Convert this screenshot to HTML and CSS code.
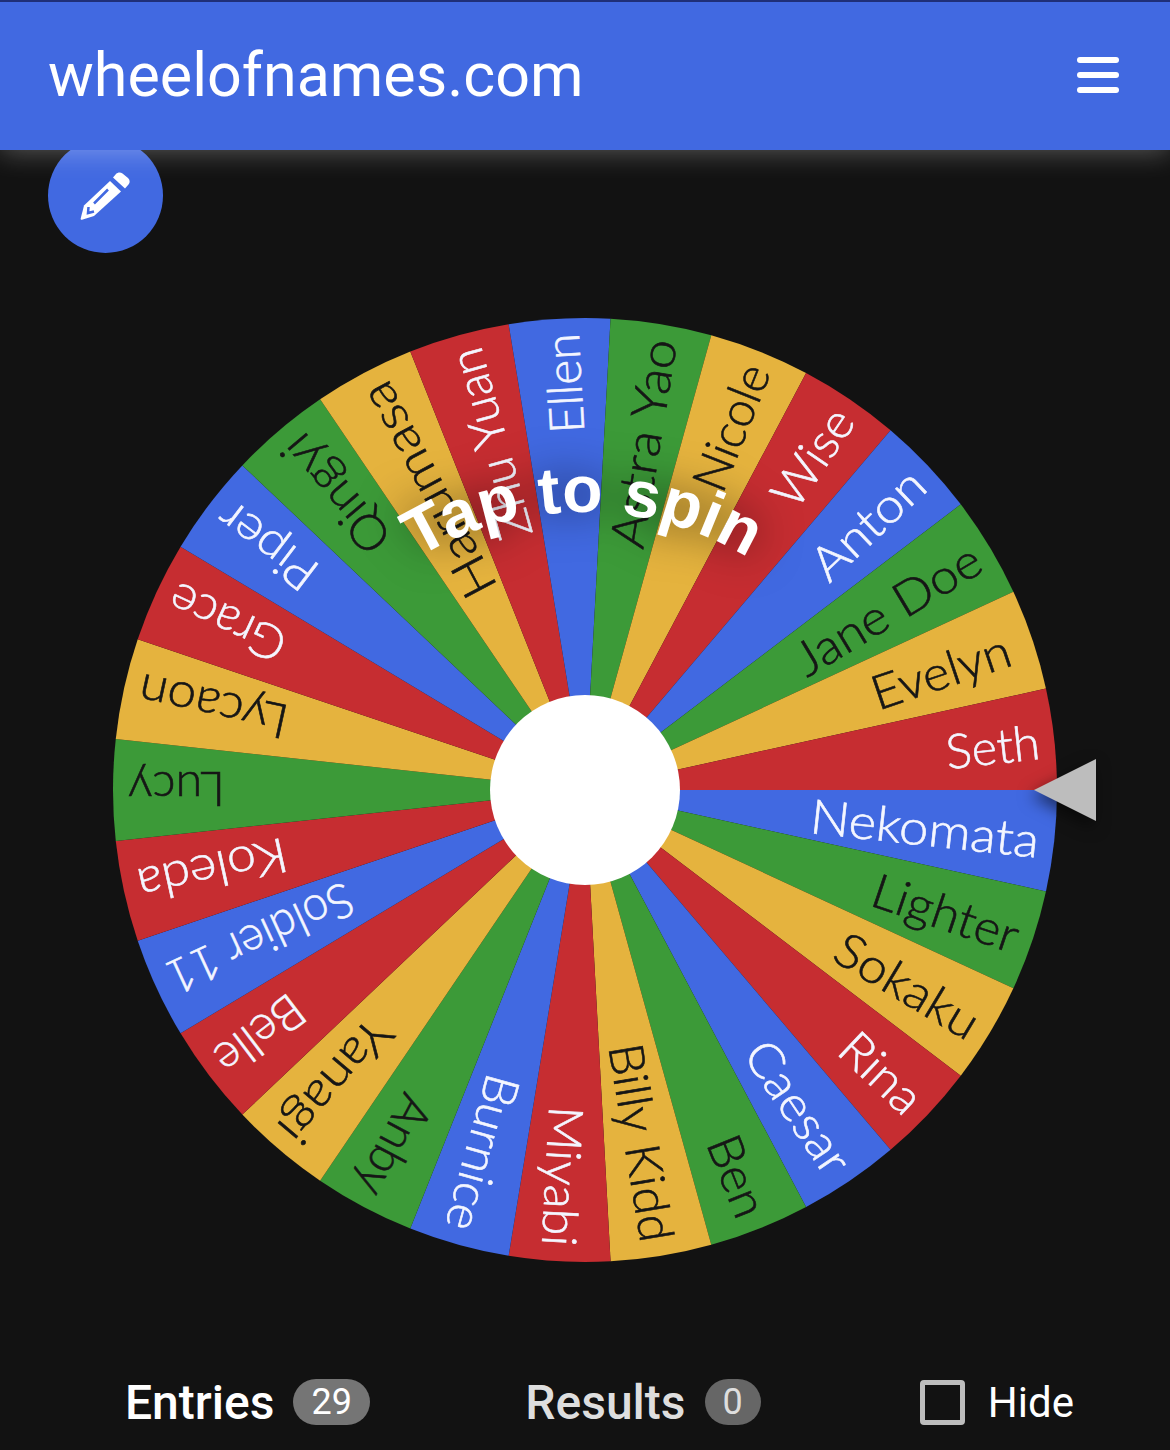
FILE: index.html
```html
<!DOCTYPE html>
<html lang="en">
<head>
    <meta charset="UTF-8">
    <meta name="viewport" content="width=device-width, initial-scale=1.0">
    <title>Wheel of Names</title>
    <link rel="stylesheet" href="styles.css">
</head>
<body>

    <header class="topbar">
        <span class="brand">wheelofnames.com</span>
        <button class="menu-btn" aria-label="Menu">
            <span></span>
            <span></span>
            <span></span>
        </button>
    </header>

    <button class="edit-btn" aria-label="Edit">
        <svg width="70" height="70" viewBox="0 0 70 70">
            <path class="pencil-cap" d="M42 16.500l3-3.500c2-2 4.500-2 6.500-.5l5.500 4.500c2 2 2.300 4.500.5 6.500l-3.500 4z"/>
            <path class="pencil-body" d="M39 20l11 10.500-27 24.500-12 3.800c-1 .2-1.500-.4-1.300-1.300l3.300-13z"/>
            <path class="pencil-slot" d="M37 28.500l-14 14M17.500 46l-.5 6 6-1.500"/>
        </svg>
    </button>

    <main class="wheel-area">
        <svg id="wheel" class="wheel" viewBox="0 0 1170 960" width="1170" height="960"></svg>
    </main>

    <footer class="tabs">
        <div class="tab tab-active">
            <span class="tab-label">Entries</span>
            <span class="badge">29</span>
        </div>
        <div class="tab tab-results">
            <span class="tab-label">Results</span>
            <span class="badge badge-dim">0</span>
        </div>
        <label class="hide-toggle">
            <span class="checkbox"></span>
            <span>Hide</span>
        </label>
    </footer>

    <script src="wheel.js"></script>
</body>
</html>
```

FILE: styles.css
```css
* {
    box-sizing: border-box;
}

html, body {
    margin: 0;
    padding: 0;
}

body {
    width: 1170px;
    height: 1450px;
    overflow: hidden;
    background-color: #121212;
    font-family: Roboto, "Liberation Sans", sans-serif;
    color: #fff;
}

.topbar {
    position: relative;
    z-index: 2;
    height: 150px;
    padding: 0 51px 0 48px;
    display: flex;
    align-items: center;
    justify-content: space-between;
    background-color: #4169e1;
    border-top: 2px solid #1f2f78;
    box-shadow: 0 2px 26px rgba(255, 255, 255, 0.3);
}

.brand {
    font-size: 61px;
    font-weight: 400;
    line-height: 1;
    margin-top: -2px;
}

.menu-btn {
    width: 42px;
    padding: 0;
    margin-top: -2px;
    display: flex;
    flex-direction: column;
    gap: 9px;
    background: none;
    border: none;
}

.menu-btn span {
    display: block;
    height: 6px;
    border-radius: 3px;
    background-color: #fff;
}

.edit-btn {
    display: flex;
    align-items: center;
    justify-content: center;
    width: 115px;
    height: 115px;
    margin: -12px 0 0 48px;
    padding: 0;
    border: none;
    border-radius: 50%;
    background-color: #4169e1;
}

.pencil-cap, .pencil-body {
    fill: #fff;
}

.pencil-slot {
    fill: none;
    stroke: #4169e1;
    stroke-width: 2.5;
}

.wheel-area {
    margin-top: 57px;
    height: 960px;
}

.wheel {
    display: block;
}

.wheel-label {
    font-family: Lato, "Open Sans", sans-serif;
    font-size: 48px;
    font-weight: 300;
    stroke-width: 0.6;
    text-anchor: end;
    dominant-baseline: central;
}

.label-light {
    fill: #f4f6ff;
    stroke: #f4f6ff;
}

.label-dark {
    fill: #161616;
    stroke: #161616;
}

.hub {
    fill: #fff;
}

.pointer {
    fill: #bdbdbd;
    filter: drop-shadow(-3px 6px 8px rgba(0, 0, 0, 0.55));
}

.spin-text {
    font-family: "Liberation Sans", Arial, sans-serif;
    font-size: 66px;
    font-weight: 700;
    fill: #fff;
    text-anchor: middle;
    filter: drop-shadow(0 0 22px rgba(0, 0, 0, 0.65));
}

.tabs {
    height: 96px;
    padding: 0 96px 0 125px;
    margin-top: 84px;
    display: flex;
    align-items: center;
    justify-content: space-between;
}

.tab {
    display: flex;
    align-items: center;
    gap: 19px;
}

.tab-results {
    margin-right: 4px;
}

.tab-label {
    font-size: 48px;
    font-weight: 500;
    color: #dedede;
}

.tab-active .tab-label {
    color: #fff;
}

.badge {
    min-width: 56px;
    height: 46px;
    padding: 0 18px;
    display: flex;
    align-items: center;
    justify-content: center;
    border-radius: 23px;
    background-color: #757575;
    font-size: 36px;
}

.badge-dim {
    padding: 0;
    background-color: #666;
    color: #dedede;
}

.hide-toggle {
    display: flex;
    align-items: center;
    gap: 23px;
    font-size: 42px;
}

.checkbox {
    width: 45px;
    height: 45px;
    border: 5px solid #bdbdbd;
    border-radius: 4px;
}
```

FILE: wheel.js
```js
const SVG_NS = 'http://www.w3.org/2000/svg';
const wheel = document.getElementById('wheel');

const CX = 585;
const CY = 480;
const RADIUS = 472;
const HUB_RADIUS = 95;
const LABEL_RADIUS = 457;

const BLUE = '#4169e1';
const GREEN = '#3c9a38';
const YELLOW = '#e5b33e';
const RED = '#c62d31';

// clockwise, starting at the pointer: name, colour, label length in px
const entries = [
    ['Nekomata', BLUE, 230], ['Lighter', GREEN, 152], ['Sokaku', YELLOW, 160], ['Rina', RED, 95],
    ['Caesar', BLUE, 150], ['Ben', GREEN, 84], ['Billy Kidd', YELLOW, 200], ['Miyabi', RED, 140],
    ['Burnice', BLUE, 160], ['Anby', GREEN, 107], ['Yanagi', YELLOW, 148], ['Belle', RED, 100],
    ['Soldier 11', BLUE, 200], ['Koleda', RED, 152], ['Lucy', GREEN, 97], ['Lycaon', YELLOW, 152],
    ['Grace', RED, 124], ['Piper', BLUE, 113], ['Qingyi', GREEN, 140], ['Harumasa', YELLOW, 237],
    ['Zhu Yuan', RED, 196], ['Ellen', BLUE, 100], ['Astra Yao', GREEN, 211], ['Nicole', YELLOW, 132],
    ['Wise', RED, 108], ['Anton', BLUE, 138], ['Jane Doe', GREEN, 209], ['Evelyn', YELLOW, 144],
    ['Seth', RED, 94]
];

function el(name, attrs, parent) {
    const node = document.createElementNS(SVG_NS, name);
    Object.keys(attrs).forEach((key) => node.setAttribute(key, attrs[key]));
    parent.appendChild(node);
    return node;
}

function point(radius, deg) {
    const rad = deg * Math.PI / 180;
    return (CX + radius * Math.cos(rad)).toFixed(2) + ' ' + (CY + radius * Math.sin(rad)).toFixed(2);
}

const step = 360 / entries.length;

entries.forEach(([name, color], i) => {
    const start = i * step;
    const end = start + step;
    el('path', {
        d: `M${CX} ${CY} L${point(RADIUS, start)} A${RADIUS} ${RADIUS} 0 0 1 ${point(RADIUS, end)} Z`,
        fill: color
    }, wheel);
});

entries.forEach(([name, color, length], i) => {
    const mid = (i + 0.5) * step;
    const inset = name === 'Evelyn' ? 10 : 0; // sits short of the rim in the original
    const label = el('text', {
        class: 'wheel-label ' + (color === BLUE || color === RED ? 'label-light' : 'label-dark'),
        x: CX + LABEL_RADIUS - inset,
        y: CY,
        textLength: length,
        lengthAdjust: 'spacingAndGlyphs',
        transform: `rotate(${mid.toFixed(3)} ${CX} ${CY})`
    }, wheel);
    label.textContent = name;
});

el('circle', { class: 'hub', cx: CX, cy: CY, r: HUB_RADIUS }, wheel);
el('polygon', { class: 'pointer', points: '1034,480 1096,449 1096,511' }, wheel);

// curved call to action above the hub
const defs = el('defs', {}, wheel);
el('path', { id: 'spin-arc', d: 'M263 522 A320 320 0 0 1 903 522' }, defs);
const spin = el('text', { class: 'spin-text' }, wheel);
const spinPath = el('textPath', { href: '#spin-arc', startOffset: '50%' }, spin);
spinPath.textContent = 'Tap to spin';
```
